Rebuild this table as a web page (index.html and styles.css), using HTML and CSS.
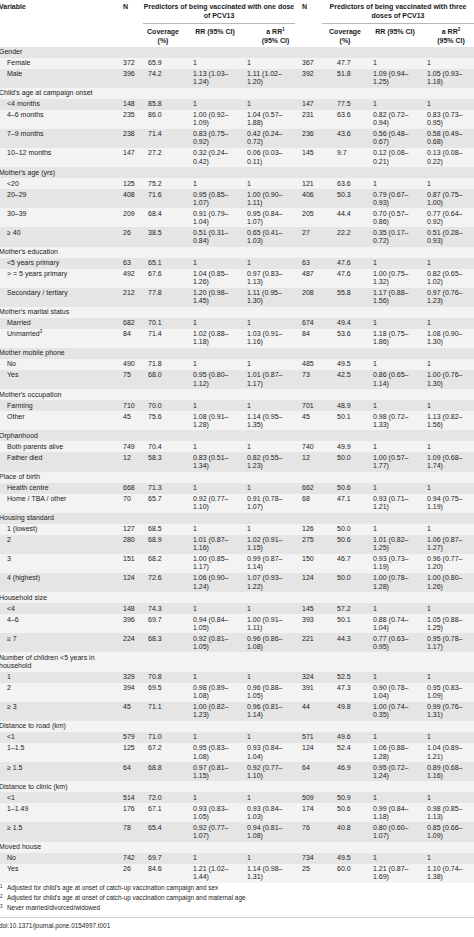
FILE: index.html
```html
<!DOCTYPE html>
<html lang="en">
<head>
<meta charset="utf-8">
<title>Table 1</title>
<link rel="stylesheet" href="styles.css">
</head>
<body>
<div class="wrap">
<table class="t">
<colgroup>
<col class="w-var"><col class="w-n"><col class="w-cov"><col class="w-rr"><col class="w-arr"><col class="w-n"><col class="w-cov2"><col class="w-rr"><col class="w-arr2">
</colgroup>
<thead>
<tr>
<th rowspan="2" class="h-var">Variable</th>
<th rowspan="2" class="h-n">N</th>
<th colspan="3" class="h-grp"><div class="rule g1">Predictors of being vaccinated with one dose<br>of PCV13</div></th>
<th rowspan="2" class="h-n">N</th>
<th colspan="3" class="h-grp"><div class="rule g2">Predictors of being vaccinated with three<br>doses of PCV13</div></th>
</tr>
<tr class="h2">
<th class="h-cov">Coverage<br>(%)</th>
<th class="h-rr">RR (95% CI)</th>
<th class="h-arr">a RR<sup>1</sup><br>(95% CI)</th>
<th class="h-cov2">Coverage<br>(%)</th>
<th class="h-rr2">RR (95% CI)</th>
<th class="h-arr2">a RR<sup>2</sup><br>(95% CI)</th>
</tr>
</thead>
<tbody>
<tr><td colspan="9" class="cat">Gender</td></tr>
<tr><td class="sub">Female</td><td>372</td><td>65.9</td><td>1</td><td>1</td><td>367</td><td class="c2">47.7</td><td>1</td><td>1</td></tr>
<tr><td class="sub">Male</td><td>396</td><td>74.2</td><td>1.13 (1.03–<br>1.24)</td><td>1.11 (1.02–<br>1.20)</td><td>392</td><td class="c2">51.8</td><td>1.09 (0.94–<br>1.25)</td><td>1.05 (0.93–<br>1.18)</td></tr>
<tr><td colspan="9" class="cat">Child's age at campaign onset</td></tr>
<tr><td class="sub">&lt;4 months</td><td>148</td><td>85.8</td><td>1</td><td>1</td><td>147</td><td class="c2">77.5</td><td>1</td><td>1</td></tr>
<tr><td class="sub">4–6 months</td><td>235</td><td>86.0</td><td>1.00 (0.92–<br>1.09)</td><td>1.04 (0.57–<br>1.88)</td><td>231</td><td class="c2">63.6</td><td>0.82 (0.72–<br>0.94)</td><td>0.83 (0.73–<br>0.95)</td></tr>
<tr><td class="sub">7–9 months</td><td>238</td><td>71.4</td><td>0.83 (0.75–<br>0.92)</td><td>0.42 (0.24–<br>0.72)</td><td>236</td><td class="c2">43.6</td><td>0.56 (0.48–<br>0.67)</td><td>0.58 (0.49–<br>0.68)</td></tr>
<tr><td class="sub">10–12 months</td><td>147</td><td>27.2</td><td>0.32 (0.24–<br>0.42)</td><td>0.06 (0.03–<br>0.11)</td><td>145</td><td class="c2">9.7</td><td>0.12 (0.08–<br>0.21)</td><td>0.13 (0.08–<br>0.22)</td></tr>
<tr><td colspan="9" class="cat">Mother's age (yrs)</td></tr>
<tr><td class="sub">&lt;20</td><td>125</td><td>75.2</td><td>1</td><td>1</td><td>121</td><td class="c2">63.6</td><td>1</td><td>1</td></tr>
<tr><td class="sub">20–29</td><td>408</td><td>71.6</td><td>0.95 (0.85–<br>1.07)</td><td>1.00 (0.90–<br>1.11)</td><td>406</td><td class="c2">50.3</td><td>0.79 (0.67–<br>0.93)</td><td>0.87 (0.75–<br>1.00)</td></tr>
<tr><td class="sub">30–39</td><td>209</td><td>68.4</td><td>0.91 (0.79–<br>1.04)</td><td>0.95 (0.84–<br>1.07)</td><td>205</td><td class="c2">44.4</td><td>0.70 (0.57–<br>0.86)</td><td>0.77 (0.64–<br>0.92)</td></tr>
<tr><td class="sub">≥ 40</td><td>26</td><td>38.5</td><td>0.51 (0.31–<br>0.84)</td><td>0.65 (0.41–<br>1.03)</td><td>27</td><td class="c2">22.2</td><td>0.35 (0.17–<br>0.72)</td><td>0.51 (0.28–<br>0.93)</td></tr>
<tr><td colspan="9" class="cat">Mother's education</td></tr>
<tr><td class="sub">&lt;5 years primary</td><td>63</td><td>65.1</td><td>1</td><td>1</td><td>63</td><td class="c2">47.6</td><td>1</td><td>1</td></tr>
<tr><td class="sub">&gt; = 5 years primary</td><td>492</td><td>67.6</td><td>1.04 (0.85–<br>1.26)</td><td>0.97 (0.83–<br>1.13)</td><td>487</td><td class="c2">47.6</td><td>1.00 (0.75–<br>1.32)</td><td>0.82 (0.65–<br>1.02)</td></tr>
<tr><td class="sub">Secondary / tertiary</td><td>212</td><td>77.8</td><td>1.20 (0.98–<br>1.45)</td><td>1.11 (0.95–<br>1.30)</td><td>208</td><td class="c2">55.8</td><td>1.17 (0.88–<br>1.56)</td><td>0.97 (0.76–<br>1.23)</td></tr>
<tr><td colspan="9" class="cat">Mother's marital status</td></tr>
<tr><td class="sub">Married</td><td>682</td><td>70.1</td><td>1</td><td>1</td><td>674</td><td class="c2">49.4</td><td>1</td><td>1</td></tr>
<tr><td class="sub">Unmarried<sup>3</sup></td><td>84</td><td>71.4</td><td>1.02 (0.88–<br>1.18)</td><td>1.03 (0.91–<br>1.16)</td><td>84</td><td class="c2">53.6</td><td>1.18 (0.75–<br>1.86)</td><td>1.08 (0.90–<br>1.30)</td></tr>
<tr><td colspan="9" class="cat">Mother mobile phone</td></tr>
<tr><td class="sub">No</td><td>490</td><td>71.8</td><td>1</td><td>1</td><td>485</td><td class="c2">49.5</td><td>1</td><td>1</td></tr>
<tr><td class="sub">Yes</td><td>75</td><td>68.0</td><td>0.95 (0.80–<br>1.12)</td><td>1.01 (0.87–<br>1.17)</td><td>73</td><td class="c2">42.5</td><td>0.86 (0.65–<br>1.14)</td><td>1.00 (0.76–<br>1.30)</td></tr>
<tr><td colspan="9" class="cat">Mother's occupation</td></tr>
<tr><td class="sub">Farming</td><td>710</td><td>70.0</td><td>1</td><td>1</td><td>701</td><td class="c2">48.9</td><td>1</td><td>1</td></tr>
<tr><td class="sub">Other</td><td>45</td><td>75.6</td><td>1.08 (0.91–<br>1.28)</td><td>1.14 (0.95–<br>1.35)</td><td>45</td><td class="c2">50.1</td><td>0.98 (0.72–<br>1.33)</td><td>1.13 (0.82–<br>1.56)</td></tr>
<tr><td colspan="9" class="cat">Orphanhood</td></tr>
<tr><td class="sub">Both parents alive</td><td>749</td><td>70.4</td><td>1</td><td>1</td><td>740</td><td class="c2">49.9</td><td>1</td><td>1</td></tr>
<tr><td class="sub">Father died</td><td>12</td><td>58.3</td><td>0.83 (0.51–<br>1.34)</td><td>0.82 (0.55–<br>1.23)</td><td>12</td><td class="c2">50.0</td><td>1.00 (0.57–<br>1.77)</td><td>1.09 (0.68–<br>1.74)</td></tr>
<tr><td colspan="9" class="cat">Place of birth</td></tr>
<tr><td class="sub">Health centre</td><td>668</td><td>71.3</td><td>1</td><td>1</td><td>662</td><td class="c2">50.6</td><td>1</td><td>1</td></tr>
<tr><td class="sub">Home / TBA / other</td><td>70</td><td>65.7</td><td>0.92 (0.77–<br>1.10)</td><td>0.91 (0.78–<br>1.07)</td><td>68</td><td class="c2">47.1</td><td>0.93 (0.71–<br>1.21)</td><td>0.94 (0.75–<br>1.19)</td></tr>
<tr><td colspan="9" class="cat">Housing standard</td></tr>
<tr><td class="sub">1 (lowest)</td><td>127</td><td>68.5</td><td>1</td><td>1</td><td>126</td><td class="c2">50.0</td><td>1</td><td>1</td></tr>
<tr><td class="sub">2</td><td>280</td><td>68.9</td><td>1.01 (0.87–<br>1.16)</td><td>1.02 (0.91–<br>1.15)</td><td>275</td><td class="c2">50.6</td><td>1.01 (0.82–<br>1.25)</td><td>1.06 (0.87–<br>1.27)</td></tr>
<tr><td class="sub">3</td><td>151</td><td>68.2</td><td>1.00 (0.85–<br>1.17)</td><td>0.99 (0.87–<br>1.14)</td><td>150</td><td class="c2">46.7</td><td>0.93 (0.73–<br>1.19)</td><td>0.96 (0.77–<br>1.20)</td></tr>
<tr><td class="sub">4 (highest)</td><td>124</td><td>72.6</td><td>1.06 (0.90–<br>1.24)</td><td>1.07 (0.93–<br>1.22)</td><td>124</td><td class="c2">50.0</td><td>1.00 (0.78–<br>1.28)</td><td>1.00 (0.80–<br>1.26)</td></tr>
<tr><td colspan="9" class="cat">Household size</td></tr>
<tr><td class="sub">&lt;4</td><td>148</td><td>74.3</td><td>1</td><td>1</td><td>145</td><td class="c2">57.2</td><td>1</td><td>1</td></tr>
<tr><td class="sub">4–6</td><td>396</td><td>69.7</td><td>0.94 (0.84–<br>1.05)</td><td>1.00 (0.91–<br>1.11)</td><td>393</td><td class="c2">50.1</td><td>0.88 (0.74–<br>1.04)</td><td>1.05 (0.88–<br>1.25)</td></tr>
<tr><td class="sub">≥ 7</td><td>224</td><td>68.3</td><td>0.92 (0.81–<br>1.05)</td><td>0.96 (0.86–<br>1.08)</td><td>221</td><td class="c2">44.3</td><td>0.77 (0.63–<br>0.95)</td><td>0.95 (0.78–<br>1.17)</td></tr>
<tr><td colspan="9" class="cat">Number of children &lt;5 years in<br>household</td></tr>
<tr><td class="sub">1</td><td>329</td><td>70.8</td><td>1</td><td>1</td><td>324</td><td class="c2">52.5</td><td>1</td><td>1</td></tr>
<tr><td class="sub">2</td><td>394</td><td>69.5</td><td>0.98 (0.89–<br>1.08)</td><td>0.96 (0.88–<br>1.05)</td><td>391</td><td class="c2">47.3</td><td>0.90 (0.78–<br>1.04)</td><td>0.95 (0.83–<br>1.09)</td></tr>
<tr><td class="sub">≥ 3</td><td>45</td><td>71.1</td><td>1.00 (0.82–<br>1.23)</td><td>0.96 (0.81–<br>1.14)</td><td>44</td><td class="c2">49.8</td><td>1.00 (0.74–<br>0.35)</td><td>0.99 (0.76–<br>1.31)</td></tr>
<tr><td colspan="9" class="cat">Distance to road (km)</td></tr>
<tr><td class="sub">&lt;1</td><td>579</td><td>71.0</td><td>1</td><td>1</td><td>571</td><td class="c2">49.6</td><td>1</td><td>1</td></tr>
<tr><td class="sub">1–1.5</td><td>125</td><td>67.2</td><td>0.95 (0.83–<br>1.08)</td><td>0.93 (0.84–<br>1.04)</td><td>124</td><td class="c2">52.4</td><td>1.06 (0.88–<br>1.28)</td><td>1.04 (0.89–<br>1.21)</td></tr>
<tr><td class="sub">≥ 1.5</td><td>64</td><td>68.8</td><td>0.97 (0.81–<br>1.15)</td><td>0.92 (0.77–<br>1.10)</td><td>64</td><td class="c2">46.9</td><td>0.95 (0.72–<br>1.24)</td><td>0.89 (0.68–<br>1.16)</td></tr>
<tr><td colspan="9" class="cat">Distance to clinic (km)</td></tr>
<tr><td class="sub">&lt;1</td><td>514</td><td>72.0</td><td>1</td><td>1</td><td>509</td><td class="c2">50.9</td><td>1</td><td>1</td></tr>
<tr><td class="sub">1–1.49</td><td>176</td><td>67.1</td><td>0.93 (0.83–<br>1.05)</td><td>0.93 (0.84–<br>1.03)</td><td>174</td><td class="c2">50.6</td><td>0.99 (0.84–<br>1.18)</td><td>0.98 (0.85–<br>1.13)</td></tr>
<tr><td class="sub">≥ 1.5</td><td>78</td><td>65.4</td><td>0.92 (0.77–<br>1.07)</td><td>0.94 (0.81–<br>1.08)</td><td>76</td><td class="c2">40.8</td><td>0.80 (0.60–<br>1.07)</td><td>0.85 (0.66–<br>1.09)</td></tr>
<tr><td colspan="9" class="cat">Moved house</td></tr>
<tr><td class="sub">No</td><td>742</td><td>69.7</td><td>1</td><td>1</td><td>734</td><td class="c2">49.5</td><td>1</td><td>1</td></tr>
<tr><td class="sub">Yes</td><td>26</td><td>84.6</td><td>1.21 (1.02–<br>1.44)</td><td>1.14 (0.98–<br>1.31)</td><td>25</td><td class="c2">60.0</td><td>1.21 (0.87–<br>1.69)</td><td>1.10 (0.74–<br>1.38)</td></tr>
</tbody>
</table>
<div class="notes">
<p class="fn"><sup class="mk">1</sup><span>Adjusted for child's age at onset of catch-up vaccination campaign and sex</span></p>
<p class="fn"><sup class="mk">2</sup><span>Adjusted for child's age at onset of catch-up vaccination campaign and maternal age</span></p>
<p class="fn"><sup class="mk">3</sup><span>Never married/divorced/widowed</span></p>
</div>
<p class="doi">doi:10.1371/journal.pone.0154997.t001</p>
</div>
</body>
</html>
```

FILE: styles.css
```css
html, body {
  margin: 0;
  padding: 0;
  background: #ffffff;
  overflow: hidden;
}

body {
  font-family: "Liberation Sans", Arial, sans-serif;
  color: #222222;
  width: 474px;
}

.wrap {
  margin-left: -1px;
  width: 477px;
}

.t {
  border-collapse: collapse;
  border-spacing: 0;
  table-layout: fixed;
  width: 477px;
  font-size: 7px;
}

.w-var { width: 119px; }
.w-n { width: 25px; }
.w-cov { width: 45px; }
.w-rr { width: 54px; }
.w-arr { width: 55px; }
.w-cov2 { width: 46px; }
.w-arr2 { width: 54px; }

.t th {
  font-weight: bold;
  line-height: 9px;
  vertical-align: top;
  padding: 1.5px 0 0;
  color: #1a1a1a;
}

.t th sup,
.t td sup {
  font-size: 4.5px;
  line-height: 0;
  vertical-align: 3px;
}

.h-var { text-align: left; padding-left: 0; }
.h-n { text-align: left; padding-left: 5px !important; }

.h-grp {
  text-align: center;
}

.rule {
  border-bottom: 1px solid #b8b8b8;
  padding-bottom: 3px;
}

.rule.g1 { margin-right: 2px; }
.rule.g2 { margin-right: 2px; }

.t .h2 th {
  text-align: center;
  padding: 3.5px 0 1.5px;
}

.t .h2 .h-cov { padding-right: 5px; }
.t .h2 .h-arr { padding-left: 12px; }
.t .h2 .h-arr2 { padding-left: 4px; }

.t td {
  line-height: 8.15px;
  padding: 1.425px 0 1.425px 5px;
  vertical-align: top;
  white-space: nowrap;
}

.t td.c2 { padding-left: 15px; }
.t td.cat { padding-left: 0; }
.t td.sub { padding-left: 8px; }

.t tbody tr:nth-child(odd) { background: #e5e5e5; }
.t tbody tr:nth-child(even) { background: #f3f3f3; }

.notes {
  padding-top: 0;
}

.fn {
  margin: 0;
  display: flex;
  font-size: 6.4px;
  line-height: 10px;
}

.fn .mk {
  width: 8px;
  flex: none;
  font-size: 4.5px;
  line-height: 8px;
  vertical-align: top;
  padding-left: 1px;
  box-sizing: border-box;
}

.doi {
  margin: 4px 0 0;
  border-top: 1px solid #d0d0d0;
  padding-top: 3.5px;
  font-size: 6.4px;
  line-height: 9px;
}
```
